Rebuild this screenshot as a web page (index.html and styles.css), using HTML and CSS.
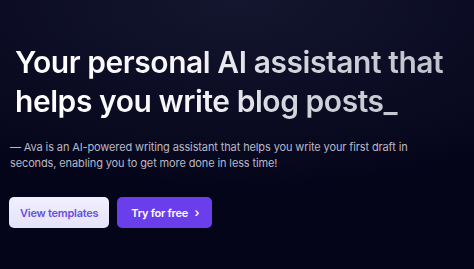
FILE: index.html
```html
<!DOCTYPE html>
<html lang="en">
<head>
    <meta charset="UTF-8">
    <meta name="viewport" content="width=device-width, initial-scale=1.0">
    <title>Ava - AI writing assistant</title>
    <link rel="stylesheet" href="styles.css">
</head>
<body>
    <div class="hero">
        <h1 class="hero-title">Your personal AI assistant that helps you write blog posts_</h1>
        <p class="hero-text">— Ava is an AI-powered writing assistant that helps you write your first draft in seconds, enabling you to get more done in less time!</p>
        <div class="actions">
            <button class="btn btn-light">View templates</button>
            <button class="btn btn-primary">Try for free <span class="chevron">›</span></button>
        </div>
    </div>
</body>
</html>
```

FILE: styles.css
```css
html, body {
    margin: 0;
    height: 100%;
}
body {
    font-family: Inter, "Noto Sans", sans-serif;
    background: radial-gradient(ellipse 90% 70% at 50% 0%, #14162f 0%, #0c0d24 55%, #05051a 100%);
    background-color: #05051a;
    overflow: hidden;
}
.hero {
    padding: 43px 0 0 9px;
}
.hero-title {
    margin: 0 0 0 6px;
    width: 440px;
    font-size: 30px;
    line-height: 39px;
    font-weight: 600;
    letter-spacing: -0.45px;
    background: linear-gradient(90deg, #ffffff 0%, #f6f6f9 40%, #d6d6de 60%, #c0c0cc 100%);
    -webkit-background-clip: text;
    background-clip: text;
    color: transparent;
}
.hero-text {
    margin: 18px 0 0 1px;
    width: 398px;
    font-size: 11px;
    line-height: 16px;
    letter-spacing: -0.12px;
    color: #b9b9c7;
}
.actions {
    display: flex;
    gap: 8px;
    margin-top: 26px;
}
.btn {
    height: 31px;
    padding: 0 11px;
    border: none;
    border-radius: 5px;
    font-family: inherit;
    font-size: 11px;
    font-weight: 600;
    letter-spacing: -0.25px;
    cursor: pointer;
}
.btn-light {
    background: linear-gradient(180deg, #f1f0fd, #e4e2fa);
    color: #6a4ee0;
}
.btn-primary {
    padding: 0 13px 0 14px;
    background: #6a3eea;
    color: #fff;
}
.chevron {
    margin-left: 4px;
    font-size: 12px;
}
```
